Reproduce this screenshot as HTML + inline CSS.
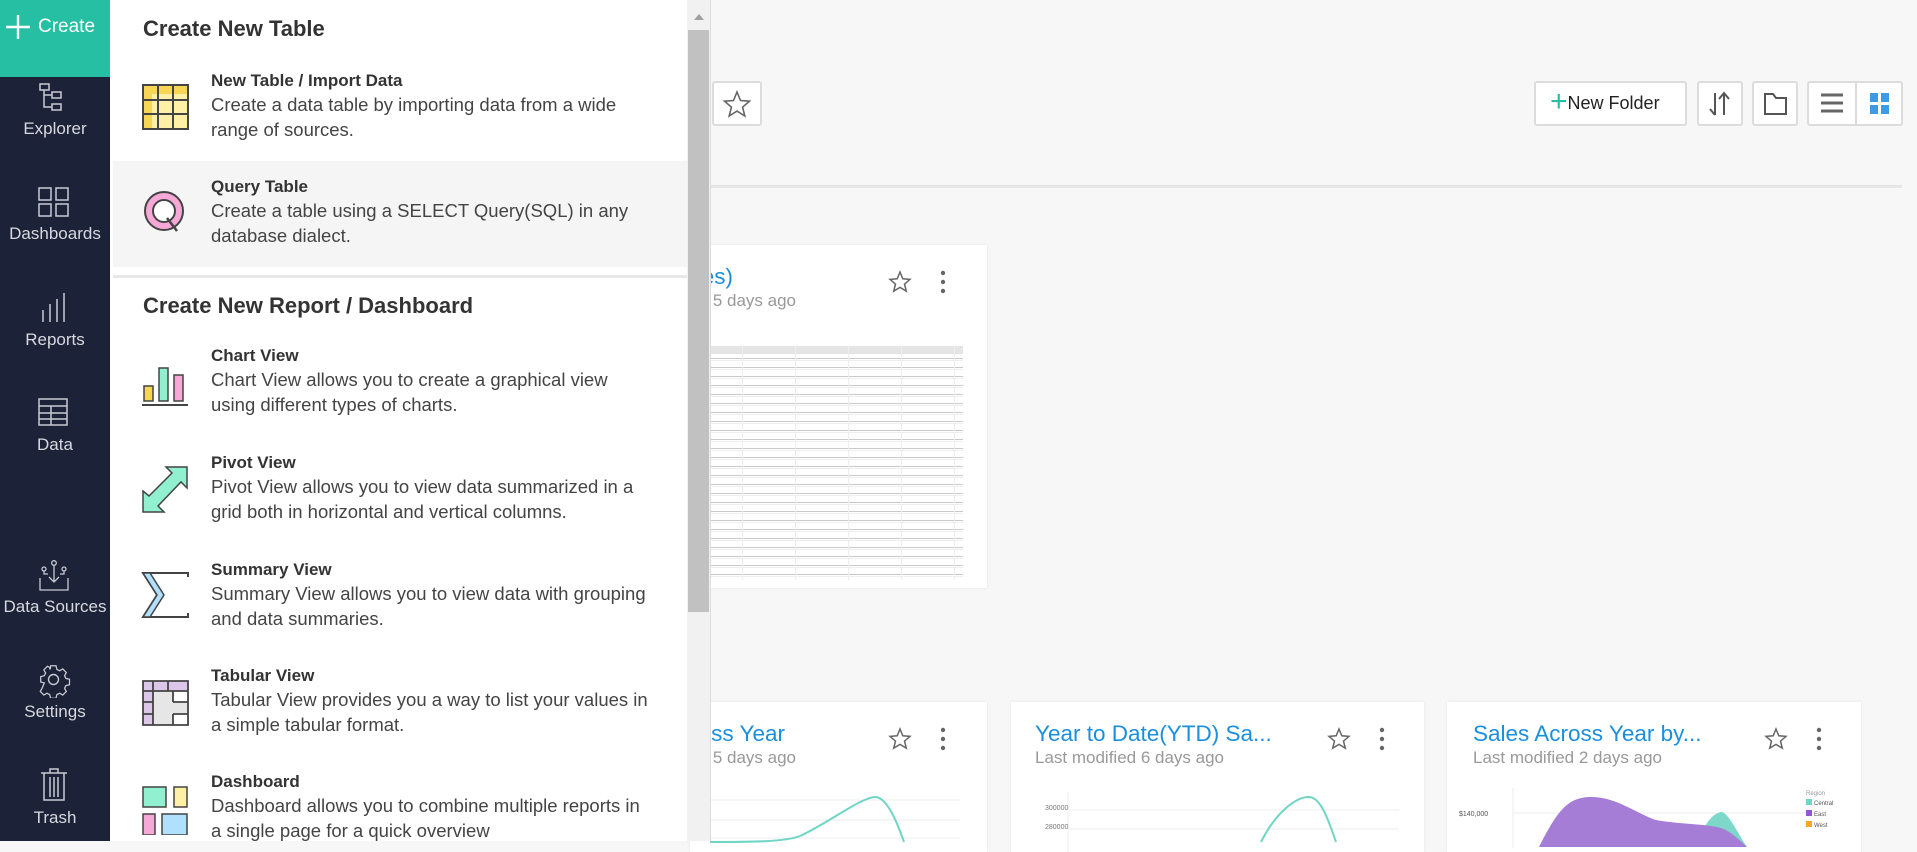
<!DOCTYPE html>
<html><head><meta charset="utf-8"><style>
*{box-sizing:border-box;margin:0;padding:0}
body{width:1917px;height:841px;overflow:hidden;background:#f7f7f7;font-family:"Liberation Sans",sans-serif;position:relative;color:#333}
.abs{position:absolute}
#side{left:0;top:0;width:110px;height:841px;background:#1c2237}
#create{left:0;top:0;width:110px;height:77px;background:#27bfa4;color:#fff;font-size:19px}
.nav{position:absolute;left:0;width:110px;text-align:center;color:#d7d9df;font-size:17px}
#panel{left:110px;top:0;width:577px;height:841px;background:#fff}
#sb{left:687px;top:0;width:24px;height:841px;background:#f1f1f1;border-right:1px solid #ddd}
h2{position:absolute;left:143px;font-size:22px;font-weight:bold;color:#333}
.it{position:absolute;left:211px;width:440px}
.it b{display:block;font-size:17px;color:#333;height:24px;line-height:24px}
.it p{font-size:18.5px;line-height:24.5px;color:#444}
.ic{position:absolute;left:141px}
.btn{position:absolute;top:81px;height:45px;background:#fff;border:2px solid #dcdcdc;border-radius:3px}
.card{position:absolute;background:#fff;box-shadow:0 0 3px rgba(0,0,0,.08)}
.ct{position:absolute;font-size:22.5px;color:#1a8fde;white-space:nowrap}
.cs{position:absolute;font-size:17px;color:#999;white-space:nowrap}
</style></head><body>

<!-- main area -->
<div class="btn" style="left:712px;width:50px"><svg width="46" height="41" viewBox="0 0 46 41"><path d="M23 9l3.5 8.5 9 .7-6.9 5.9 2.2 8.9L23 28.1 15.2 33l2.2-8.9-6.9-5.9 9-.7z" fill="none" stroke="#666" stroke-width="1.6"/></svg></div>
<div class="btn" style="left:1534px;width:153px;font-size:18px;line-height:41px;padding-left:14px;color:#222"><span style="color:#27bfa4;font-size:30px;line-height:38px;vertical-align:top;font-weight:300">+</span>New Folder</div>
<div class="btn" style="left:1697px;width:46px"><svg width="42" height="41"><path d="M16 10v22M11 26l5 6M25 32V10M20 16l5-6 5 6" fill="none" stroke="#555" stroke-width="2"/></svg></div>
<div class="btn" style="left:1752px;width:46px"><svg width="42" height="41"><path d="M11 11h8l3 4h10v16H11z" fill="none" stroke="#555" stroke-width="2"/></svg></div>
<div class="btn" style="left:1807px;width:96px"><div class="abs" style="left:46px;top:0;width:2px;height:41px;background:#dcdcdc"></div>
<svg class="abs" style="left:0;top:0" width="46" height="41"><path d="M12 12h22M12 20h22M12 28h22" stroke="#666" stroke-width="3"/></svg>
<svg class="abs" style="left:48px;top:0" width="46" height="41"><rect x="13" y="10" width="8" height="9" fill="#3d9ae5"/><rect x="24" y="10" width="8" height="9" fill="#3d9ae5"/><rect x="13" y="22" width="8" height="9" fill="#3d9ae5"/><rect x="24" y="22" width="8" height="9" fill="#3d9ae5"/></svg></div>
<div class="abs" style="left:700px;top:185px;width:1202px;height:3px;background:#e6e6e6"></div>

<div class="card" style="left:690px;top:245px;width:297px;height:343px">
<div class="ct" style="right:254px;top:19px">Sales Across Years (Sales)</div>
<div class="cs" style="right:191px;top:46px">Last modified 5 days ago</div>
<svg class="abs" style="left:198px;top:24px" width="70" height="30"><path d="M12 3l2.8 6.8 7.2.6-5.5 4.7 1.8 7.1L12 18.4l-6.3 3.8 1.8-7.1L2 10.4l7.2-.6z" fill="none" stroke="#666" stroke-width="1.5"/><circle cx="55" cy="4" r="2.2" fill="#666"/><circle cx="55" cy="13" r="2.2" fill="#666"/><circle cx="55" cy="22" r="2.2" fill="#666"/></svg>
<div class="abs" style="left:0;top:101px;width:273px;height:8px;background:#e5e5e5"></div>
<div class="abs" style="left:0;top:109px;width:273px;height:226px;background:repeating-linear-gradient(#fff 0 4px,#c9c9c9 4px 5px,#fff 5px 6px,#eee 6px 7px,#fff 7px 9px)"></div>
<div class="abs" style="left:0;top:101px;width:273px;height:234px;background:repeating-linear-gradient(90deg,transparent 0 52px,#eee 52px 53px)"></div>
</div>

<div class="card" style="left:690px;top:702px;width:297px;height:150px">
<div class="ct" style="right:202px;top:19px">Sales Across Year</div>
<div class="cs" style="right:191px;top:46px">Last modified 5 days ago</div>
<svg class="abs" style="left:198px;top:24px" width="70" height="30"><path d="M12 3l2.8 6.8 7.2.6-5.5 4.7 1.8 7.1L12 18.4l-6.3 3.8 1.8-7.1L2 10.4l7.2-.6z" fill="none" stroke="#666" stroke-width="1.5"/><circle cx="55" cy="4" r="2.2" fill="#666"/><circle cx="55" cy="13" r="2.2" fill="#666"/><circle cx="55" cy="22" r="2.2" fill="#666"/></svg>
<svg class="abs" style="left:0;top:0" width="297" height="150"><path d="M0 98h270M0 118h270M0 136h270" stroke="#eee"/><path d="M20 140C60 140 95 140 110 134 140 120 170 96 185 95 197 95 207 120 214 140" fill="none" stroke="#6fd6c6" stroke-width="2"/></svg>
</div>

<div class="card" style="left:1011px;top:702px;width:413px;height:150px">
<div class="ct" style="left:24px;top:19px">Year to Date(YTD) Sa...</div>
<div class="cs" style="left:24px;top:46px">Last modified 6 days ago</div>
<svg class="abs" style="left:316px;top:24px" width="70" height="30"><path d="M12 3l2.8 6.8 7.2.6-5.5 4.7 1.8 7.1L12 18.4l-6.3 3.8 1.8-7.1L2 10.4l7.2-.6z" fill="none" stroke="#666" stroke-width="1.5"/><circle cx="55" cy="4" r="2.2" fill="#666"/><circle cx="55" cy="13" r="2.2" fill="#666"/><circle cx="55" cy="22" r="2.2" fill="#666"/></svg>
<svg class="abs" style="left:0;top:0" width="413" height="150"><path d="M58 108h330M58 127h330" stroke="#eee"/><path d="M57 90v60" stroke="#eee"/><text x="34" y="108" font-size="7" fill="#777" font-family="Liberation Sans">300000</text><text x="34" y="127" font-size="7" fill="#777" font-family="Liberation Sans">280000</text><path d="M250 140C265 110 285 95 298 95 310 95 318 120 325 140" fill="none" stroke="#6fd6c6" stroke-width="2"/></svg>
</div>

<div class="card" style="left:1447px;top:702px;width:414px;height:150px">
<div class="ct" style="left:26px;top:19px">Sales Across Year by...</div>
<div class="cs" style="left:26px;top:46px">Last modified 2 days ago</div>
<svg class="abs" style="left:317px;top:24px" width="70" height="30"><path d="M12 3l2.8 6.8 7.2.6-5.5 4.7 1.8 7.1L12 18.4l-6.3 3.8 1.8-7.1L2 10.4l7.2-.6z" fill="none" stroke="#666" stroke-width="1.5"/><circle cx="55" cy="4" r="2.2" fill="#666"/><circle cx="55" cy="13" r="2.2" fill="#666"/><circle cx="55" cy="22" r="2.2" fill="#666"/></svg>
<svg class="abs" style="left:0;top:0" width="414" height="150"><path d="M66 111h300" stroke="#eee"/><path d="M66 86v60" stroke="#eee"/><text x="12" y="114" font-size="7" fill="#555" font-family="Liberation Sans">$140,000</text>
<path d="M255 130C262 115 270 110 275 110 282 112 290 130 300 145H250z" fill="#7dd8ca"/>
<path d="M92 145C110 110 120 95 144 95 170 95 190 112 209 118 230 122 260 122 274 126 285 130 292 138 300 145z" fill="#a57cd6"/>
<text x="359" y="93" font-size="6" fill="#999" font-family="Liberation Sans">Region</text>
<rect x="359" y="97" width="6" height="6" fill="#6fd6c6"/><text x="367" y="103" font-size="6" fill="#555" font-family="Liberation Sans">Central</text>
<rect x="359" y="108" width="6" height="6" fill="#9457d1"/><text x="367" y="114" font-size="6" fill="#555" font-family="Liberation Sans">East</text>
<rect x="359" y="119" width="6" height="6" fill="#f5a623"/><text x="367" y="125" font-size="6" fill="#555" font-family="Liberation Sans">West</text></svg>
</div>

<!-- sidebar -->
<div id="side" class="abs"></div>
<div id="create" class="abs"><svg class="abs" style="left:5px;top:14px" width="26" height="26"><path d="M13 1v24M1 13h24" stroke="#fff" stroke-width="2.4"/></svg><span class="abs" style="left:38px;top:16px">Create</span></div>

<svg class="abs" style="left:38px;top:82px" width="34" height="34" fill="none" stroke="#c8cbd3" stroke-width="1.5"><rect x="2" y="2" width="9" height="6"/><rect x="14" y="10" width="9" height="6"/><rect x="14" y="22" width="9" height="6"/><path d="M6 8v17h8M6 13h8"/></svg>
<div class="nav" style="top:119px">Explorer</div>
<svg class="abs" style="left:38px;top:187px" width="34" height="34" fill="none" stroke="#c8cbd3" stroke-width="1.5"><rect x="1" y="1" width="12" height="12"/><rect x="18" y="1" width="12" height="12"/><rect x="1" y="17" width="12" height="12"/><rect x="18" y="17" width="12" height="12"/></svg>
<div class="nav" style="top:224px">Dashboards</div>
<svg class="abs" style="left:40px;top:292px" width="30" height="34" stroke="#c8cbd3" stroke-width="1.5"><path d="M3 30V18M10 30V12M17 30V7M24 30V1"/></svg>
<div class="nav" style="top:330px">Reports</div>
<svg class="abs" style="left:38px;top:398px" width="34" height="30" fill="none" stroke="#c8cbd3" stroke-width="1.5"><rect x="1" y="1" width="28" height="26"/><path d="M1 8h28M1 15h28M1 21h28M13 8v19"/></svg>
<div class="nav" style="top:435px">Data</div>
<svg class="abs" style="left:38px;top:560px" width="34" height="34" fill="none" stroke="#c8cbd3" stroke-width="1.3"><circle cx="16" cy="3" r="2.3"/><path d="M16 5v16M11 17l5 5 5-5"/><circle cx="6" cy="9" r="2"/><circle cx="26" cy="9" r="2"/><path d="M6 11v3h4M26 11v3h-4M2 18v12h28V18"/></svg>
<div class="nav" style="top:597px">Data Sources</div>
<svg class="abs" style="left:38px;top:664px" width="34" height="34" fill="none" stroke="#c8cbd3" stroke-width="1.4"><path d="M13 2h6l1 4 3 1.5 3.5-2 4 4-2 3.5 1.5 3 4 1v6l-4 1-1.5 3 2 3.5-4 4-3.5-2-3 1.5-1 4h-6l-1-4-3-1.5-3.5 2-4-4 2-3.5L6 21l-4-1v-6l4-1 1.5-3-2-3.5 4-4 3.5 2L12 6z" transform="scale(.9) translate(1,0)"/><circle cx="15.5" cy="15.5" r="5"/></svg>
<div class="nav" style="top:702px">Settings</div>
<svg class="abs" style="left:40px;top:768px" width="30" height="34" fill="none" stroke="#c8cbd3" stroke-width="1.5"><path d="M1 5h26M10 5V1h8v4M4 5v27h20V5M10 9v20M14 9v20M18 9v20"/></svg>
<div class="nav" style="top:808px">Trash</div>

<!-- panel -->
<div id="panel" class="abs"></div>
<div class="abs" style="left:113px;top:161px;width:574px;height:106px;background:#f5f5f5"></div>
<div class="abs" style="left:113px;top:275px;width:574px;height:3px;background:#e8e8e8"></div>
<div id="sb" class="abs"></div>
<svg class="abs" style="left:692px;top:12px" width="14" height="10"><path d="M2 8l5-6 5 6z" fill="#a0a0a0"/></svg>
<div class="abs" style="left:688px;top:30px;width:21px;height:582px;background:#c1c1c1"></div>

<h2 style="top:16px">Create New Table</h2>
<h2 style="top:293px">Create New Report / Dashboard</h2>

<svg class="ic" style="top:83px" width="50" height="50"><rect x="2" y="2" width="45" height="44" fill="#fff0a8" stroke="#444" stroke-width="2"/><path d="M2 2h45v9H2zM2 2h9v44H2z" fill="#f7d655"/><path d="M17 2v44M32 2v44M2 17h45M2 31h45" stroke="#444" stroke-width="2"/><path d="M2 2h45v44H2z" fill="none" stroke="#444" stroke-width="2"/></svg>
<div class="it" style="top:69px"><b>New Table / Import Data</b><p>Create a data table by importing data from a wide range of sources.</p></div>

<svg class="ic" style="top:188px" width="50" height="50"><circle cx="23" cy="23" r="19" fill="#f6a8d6" stroke="#444" stroke-width="2"/><circle cx="23" cy="23" r="11" fill="#fff" stroke="#444" stroke-width="2"/><path d="M26 30l10 13" stroke="#444" stroke-width="2.5"/></svg>
<div class="it" style="top:175px"><b>Query Table</b><p>Create a table using a SELECT Query(SQL) in any database dialect.</p></div>

<svg class="ic" style="top:356px" width="50" height="50"><rect x="3" y="30" width="9" height="15" fill="#f7d655" stroke="#444" stroke-width="1.5"/><rect x="18" y="12" width="9" height="33" fill="#90f0cf" stroke="#444" stroke-width="1.5"/><rect x="33" y="19" width="9" height="26" fill="#f6a8d6" stroke="#444" stroke-width="1.5"/><path d="M1 49h46" stroke="#444" stroke-width="2"/></svg>
<div class="it" style="top:344px"><b>Chart View</b><p>Chart View allows you to create a graphical view using different types of charts.</p></div>

<svg class="ic" style="top:465px" width="50" height="50"><path d="M46 2v21l-6-6-23 24 6 6H2V26l6 5 23-23-6-6z" fill="#90f0cf" stroke="#444" stroke-width="1.5"/></svg>
<div class="it" style="top:451px"><b>Pivot View</b><p>Pivot View allows you to view data summarized in a grid both in horizontal and vertical columns.</p></div>

<svg class="ic" style="top:571px" width="50" height="50"><path d="M47 6V2H2l14 22L2 46h45v-4" fill="none" stroke="#444" stroke-width="2"/><path d="M2 2h7l14 22L9 46H2l14-22z" fill="#b0e0fb" stroke="#444" stroke-width="1.5"/></svg>
<div class="it" style="top:558px"><b>Summary View</b><p>Summary View allows you to view data with grouping and data summaries.</p></div>

<svg class="ic" style="top:679px" width="50" height="50"><rect x="2" y="2" width="45" height="44" fill="#dcc6ea"/><path d="M12 12h35v34H12z" fill="#e6e6e6"/><path d="M32 12h15v11H32zM32 35h15v11H32z" fill="#fff"/><path d="M2 2h45v44H2zM2 12h45M2 23h10M2 35h10M12 2v44M27 2v10M32 12v11M32 35v11M32 23h15M32 35h15" fill="none" stroke="#444" stroke-width="1.8"/></svg>
<div class="it" style="top:664px"><b>Tabular View</b><p>Tabular View provides you a way to list your values in a simple tabular format.</p></div>

<svg class="ic" style="top:785px" width="50" height="50"><rect x="2" y="2" width="23" height="20" fill="#90f0cf" stroke="#444" stroke-width="1.5"/><rect x="33" y="2" width="13" height="20" fill="#fff0a8" stroke="#444" stroke-width="1.5"/><rect x="2" y="29" width="12" height="21" fill="#f6a8d6" stroke="#444" stroke-width="1.5"/><rect x="21" y="29" width="25" height="21" fill="#b0e0fb" stroke="#444" stroke-width="1.5"/></svg>
<div class="it" style="top:770px"><b>Dashboard</b><p>Dashboard allows you to combine multiple reports in a single page for a quick overview</p></div>

</body></html>
